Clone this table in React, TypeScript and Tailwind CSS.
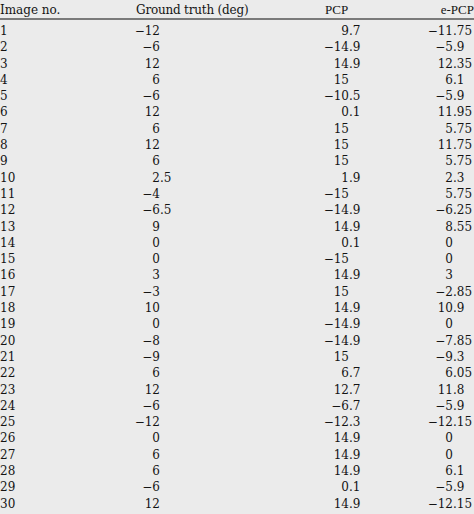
const rows: [string, string, string, string][] = [
  ['1', '−12', '9.7', '−11.75'],
  ['2', '−6', '−14.9', '−5.9'],
  ['3', '12', '14.9', '12.35'],
  ['4', '6', '15', '6.1'],
  ['5', '−6', '−10.5', '−5.9'],
  ['6', '12', '0.1', '11.95'],
  ['7', '6', '15', '5.75'],
  ['8', '12', '15', '11.75'],
  ['9', '6', '15', '5.75'],
  ['10', '2.5', '1.9', '2.3'],
  ['11', '−4', '−15', '5.75'],
  ['12', '−6.5', '−14.9', '−6.25'],
  ['13', '9', '14.9', '8.55'],
  ['14', '0', '0.1', '0'],
  ['15', '0', '−15', '0'],
  ['16', '3', '14.9', '3'],
  ['17', '−3', '15', '−2.85'],
  ['18', '10', '14.9', '10.9'],
  ['19', '0', '−14.9', '0'],
  ['20', '−8', '−14.9', '−7.85'],
  ['21', '−9', '15', '−9.3'],
  ['22', '6', '6.7', '6.05'],
  ['23', '12', '12.7', '11.8'],
  ['24', '−6', '−6.7', '−5.9'],
  ['25', '−12', '−12.3', '−12.15'],
  ['26', '0', '14.9', '0'],
  ['27', '6', '14.9', '0'],
  ['28', '6', '14.9', '6.1'],
  ['29', '−6', '0.1', '−5.9'],
  ['30', '12', '14.9', '−12.15'],
];

// split a value at the decimal point so columns line up on it
const split = (v: string) => {
  const i = v.indexOf('.');
  return i === -1 ? [v, ''] : [v.slice(0, i), v.slice(i)];
};

const Num = ({ value }: { value: string }) => {
  const [int, frac] = split(value);
  return (
    <>
      <span className="text-right">{int}</span>
      <span className="text-left whitespace-nowrap">{frac}</span>
    </>
  );
};

export default function App() {
  return (
    <div className="w-[474px] h-[514px] overflow-hidden bg-[#ebebeb] text-[#141414] text-[12px] font-['DejaVu_Serif',serif]">
      <div className="grid grid-cols-[136px_189px_90px_1fr] h-[20px] pb-[6px] items-center border-b-2 border-[#7a7a7a] whitespace-nowrap">
        <span>Image no.</span>
        <span className="tracking-[-0.2px]">Ground truth (deg)</span>
        <span className="font-['Liberation_Serif',serif] text-[13px]">PCP</span>
        <span className="text-right font-['Liberation_Serif',serif] text-[13px]">e-PCP</span>
      </div>
      <div className="pt-[2px]">
        {rows.map(([n, gt, pcp, epcp]) => (
          <div
            key={n}
            className="grid grid-cols-[100px_60px_30px_159px_30px_74px_21px] h-[16.3px] items-center whitespace-nowrap"
          >
            <span>{n}</span>
            <Num value={gt} />
            <Num value={pcp} />
            <Num value={epcp} />
          </div>
        ))}
      </div>
    </div>
  );
}
